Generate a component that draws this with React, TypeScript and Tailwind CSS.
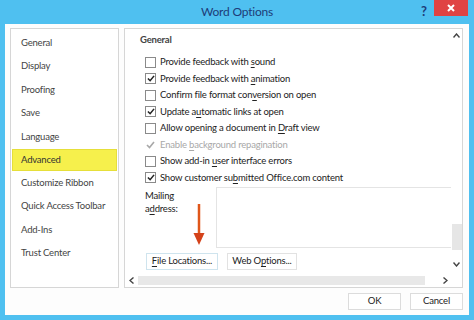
import React from 'react'

const font = { fontFamily: 'Lato, "Noto Sans", Arial, sans-serif' }

type Opt = { label: React.ReactNode; state: 'on' | 'off' | 'disabled' }

function U({ children }: { children: React.ReactNode }) {
  return <span className="underline underline-offset-2">{children}</span>
}

const options: Opt[] = [
  { label: <>Provide feedback with <U>s</U>ound</>, state: 'off' },
  { label: <>Provide feedback with <U>a</U>nimation</>, state: 'on' },
  { label: <>Confirm file format con<U>v</U>ersion on open</>, state: 'off' },
  { label: <>Update a<U>u</U>tomatic links at open</>, state: 'on' },
  { label: <>Allow opening a document in <U>D</U>raft view</>, state: 'off' },
  { label: <>Enable <U>b</U>ackground repagination</>, state: 'disabled' },
  { label: <>Show add-in <U>u</U>ser interface errors</>, state: 'off' },
  { label: <>Show customer su<U>b</U>mitted Office.com content</>, state: 'on' },
]

const nav = [
  'General',
  'Display',
  'Proofing',
  'Save',
  'Language',
  'Advanced',
  'Customize Ribbon',
  'Quick Access Toolbar',
  'Add-Ins',
  'Trust Center',
]

function Check({ state }: { state: Opt['state'] }) {
  if (state === 'disabled') {
    return (
      <div className="flex h-[11px] w-[11px] items-center justify-center">
        <svg width="9" height="8" viewBox="0 0 9 8">
          <path d="M1 4 L3.5 6.5 L8 1" fill="none" stroke="#a8a8a8" strokeWidth="1.6" />
        </svg>
      </div>
    )
  }
  return (
    <div className="flex h-[11px] w-[11px] items-center justify-center border border-[#8a8a8a] bg-white">
      {state === 'on' ? (
        <svg width="8" height="7" viewBox="0 0 9 8">
          <path d="M1 4 L3.5 6.5 L8 1" fill="none" stroke="#222" strokeWidth="1.8" />
        </svg>
      ) : null}
    </div>
  )
}

export default function App() {
  return (
    <div
      className="h-[320px] w-[474px] overflow-hidden bg-[#4fc0f0] text-[9.5px] tracking-[-0.2px] text-[#333]"
      style={font}
    >
      <div className="relative flex h-[24px] items-center justify-center">
        <span className="text-[12px] text-[#1e3c78]">Word Options</span>
        <span className="absolute left-[421px] top-[2px] text-[13px] font-bold text-[#1e3c78]">?</span>
        <div className="absolute left-[434px] top-0 flex h-[16px] w-[34px] items-center justify-center bg-[#e04343]">
          <svg width="8" height="8" viewBox="0 0 8 8">
            <path d="M1 1 L7 7 M7 1 L1 7" stroke="#fff" strokeWidth="2" />
          </svg>
        </div>
      </div>
      <div className="mx-[5px] flex h-[291px] flex-col bg-[#fdfdfd] pl-[5px] pr-[5px] pt-[4px]">
        <div className="flex h-[260px] gap-[5px]">
          <div className="flex w-[109px] flex-col border border-[#d6d6d6] bg-white pt-[2px]">
            {nav.map((item) => (
              <div
                key={item}
                className={
                  item === 'Advanced'
                    ? 'mx-[1px] flex h-[22px] items-center border border-[#e6df3a] bg-[#f6f04c] pl-[8px] text-[#333]'
                    : 'flex h-[23.6px] items-center pl-[10px] text-[#444]'
                }
              >
                {item}
              </div>
            ))}
          </div>
          <div className="flex w-[339px] flex-col border border-[#d6d6d6] bg-white">
            <div className="flex flex-1">
              <div className="flex flex-1 flex-col pl-[15px] pt-[4px]">
                <div className="h-[18px] font-bold text-[#444]">General</div>
                <div className="flex flex-col pl-[5px] pt-[3px]">
                  {options.map((o, i) => (
                    <div key={i} className="flex h-[16.5px] items-center gap-[4px]">
                      <Check state={o.state} />
                      <span className={o.state === 'disabled' ? 'text-[#a8a8a8]' : 'text-[#222]'}>{o.label}</span>
                    </div>
                  ))}
                </div>
                <div className="relative mt-[2px] flex h-[62px] pl-[5px]">
                  <div className="w-[71px] pt-[1px] leading-[13px] text-[#222]">
                    Mailing
                    <br />
                    a<U>d</U>dress:
                  </div>
                  <div className="mt-[-1px] h-[61px] flex-1 border-y border-l border-[#e4e4e4]" />
                  <svg className="absolute left-[53px] top-[16px]" width="12" height="42" viewBox="0 0 12 42">
                    <path d="M6 0 L6 32" stroke="#e0561a" strokeWidth="2.5" />
                    <path d="M0.5 29 L6 41 L11.5 29 Z" fill="#d4421a" />
                  </svg>
                </div>
                <div className="flex gap-[9px] pl-[6px] pt-[3px]">
                  <div className="flex h-[17px] w-[72px] items-center justify-center border border-[#cfe4ee] text-[#222]">
                    <span>
                      <U>F</U>ile Locations...
                    </span>
                  </div>
                  <div className="flex h-[17px] w-[70px] items-center justify-center border border-[#e2e2e2] text-[#222]">
                    <span>
                      Web O<U>p</U>tions...
                    </span>
                  </div>
                </div>
              </div>
              <div className="flex w-[11px] flex-col items-center pt-[4px]">
                <svg width="7" height="5" viewBox="0 0 7 5">
                  <path d="M0.5 4.5 L3.5 1 L6.5 4.5" fill="none" stroke="#444" strokeWidth="1.4" />
                </svg>
                <div className="mt-[186px] h-[26px] w-[10px] bg-[#e6e6e6]" />
                <svg className="mt-[12px]" width="7" height="5" viewBox="0 0 7 5">
                  <path d="M0.5 0.5 L3.5 4 L6.5 0.5" fill="none" stroke="#444" strokeWidth="1.4" />
                </svg>
              </div>
            </div>
            <div className="flex h-[14px] items-center pl-[4px]">
              <svg width="5" height="7" viewBox="0 0 5 7">
                <path d="M4.5 0.5 L1 3.5 L4.5 6.5" fill="none" stroke="#444" strokeWidth="1.4" />
              </svg>
              <div className="ml-[4px] h-[9px] w-[287px] bg-[#e8e8e8]" />
              <svg className="ml-[18px]" width="5" height="7" viewBox="0 0 5 7">
                <path d="M0.5 0.5 L4 3.5 L0.5 6.5" fill="none" stroke="#444" strokeWidth="1.4" />
              </svg>
            </div>
          </div>
        </div>
        <div className="flex justify-end gap-[9px] pr-[1px] pt-[5px]">
          <div className="flex h-[17px] w-[53px] items-center justify-center border border-[#dcdcdc] bg-white text-[#222]">
            OK
          </div>
          <div className="flex h-[17px] w-[53px] items-center justify-center border border-[#dcdcdc] bg-white text-[#222]">
            Cancel
          </div>
        </div>
      </div>
    </div>
  )
}
